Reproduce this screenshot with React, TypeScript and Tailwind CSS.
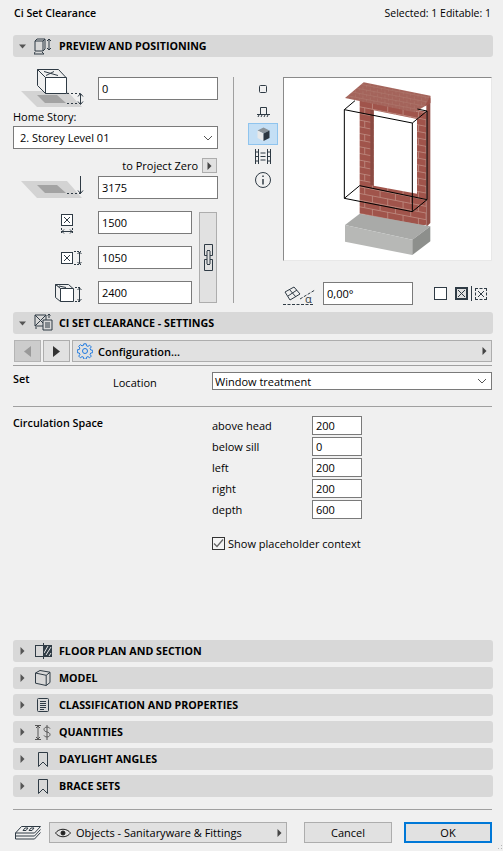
import { ReactNode } from 'react';

const ink = '#2f3b45';

// section header bar, open ones point down
const SectionBar = ({ title, open, icon }: { title: string; open?: boolean; icon: ReactNode }) => (
  <div className="flex h-[22px] items-center rounded-[3px] bg-[#d8d8d8]">
    <div className="flex w-[18px] justify-center">
      {open ? (
        <svg width="8" height="5"><path d="M1 0.500h7L4.500 4.500z" fill="#555" /></svg>
      ) : (
        <svg width="5" height="8"><path d="M0.500 0v8L4.500 4z" fill="#555" /></svg>
      )}
    </div>
    <div className="flex w-[24px] justify-center">{icon}</div>
    <span className="ml-[4px] text-[10.7px] font-bold uppercase leading-none text-black">{title}</span>
  </div>
);

const Field = ({ value, className }: { value: string; className: string }) => (
  <div className={`flex items-center border border-[#7a7a7a] bg-white pl-[3px] text-[11px] leading-none text-black ${className}`}>
    {value}
  </div>
);

const Chevron = () => (
  <svg width="10" height="6" fill="none" stroke="#555"><path d="M1 1l4 4 4-4" /></svg>
);

const SmallArrow = () => (
  <svg width="5" height="8"><path d="M0.500 0v8L4.500 4z" fill="#444" /></svg>
);

const SlabIcon = () => (
  <svg width="64" height="39" viewBox="0 0 64 39" fill="none" stroke={ink}>
    <path d="M0 22h46l15 16H16z" fill="#d3d3d3" stroke="none" />
    <path d="M16 26h20l9 8H24z" fill="#a3a3a3" stroke="none" />
    <path d="M16.500 0.500h21l7.500 8H24.500z" fill="#f0f0f0" />
    <path d="M16.500 0.500l8 8v16l-8-8z" fill="#f0f0f0" />
    <path d="M24.500 8.500H45.500V24.500H24.500z" fill="#fff" />
    <path d="M23 2.500l14 4M33 2.500L25 6.500" />
    <path d="M46 24.500h13M46 34.500h13" strokeDasharray="2 2" />
    <path d="M59.500 25v10M57 27.500l2.500-3 2.500 3M57 32.500l2.500 3 2.500-3" />
  </svg>
);

const PlaneIcon = () => (
  <svg width="64" height="23" viewBox="0 0 64 23" fill="none" stroke={ink}>
    <path d="M0 5h46l15 17H16z" fill="#d3d3d3" stroke="none" />
    <path d="M16 9h20l9 8H24z" fill="#a3a3a3" stroke="none" />
    <path d="M46 17.500h14" strokeDasharray="2 2" />
    <path d="M59.500 0v17M57 14.500l2.500 3 2.500-3" />
  </svg>
);

const WidthIcon = () => (
  <svg width="13" height="21" fill="none" stroke={ink} className="mt-[3px]">
    <rect x="0.500" y="0.500" width="11" height="11" fill="#fff" />
    <path d="M3 3l6 6M9 3L3 9" />
    <path d="M0.500 14v6M11.500 14v6" strokeDasharray="2 1" />
    <path d="M1 17.500h10M3 15.500l-2 2 2 2M9 15.500l2 2-2 2" />
  </svg>
);

const HeightIcon = () => (
  <svg width="22" height="14" fill="none" stroke={ink}>
    <rect x="0.500" y="1.500" width="11" height="11" fill="#fff" />
    <path d="M3 4l6 6M9 4L3 10" />
    <path d="M13 0.500h7M13 13.500h7" strokeDasharray="2 1" />
    <path d="M18.500 1v12M16.500 3l2-2 2 2M16.500 11l2 2 2-2" />
  </svg>
);

const DepthIcon = () => (
  <svg width="28" height="19" fill="none" stroke={ink}>
    <path d="M0.500 1.500h13l4.500 4H5.500z" fill="#f0f0f0" />
    <path d="M0.500 1.500l5 4v13l-5-4z" fill="#f0f0f0" />
    <path d="M5.500 5.500h13v13h-13z" fill="#fff" />
    <path d="M4 3l7 1.500" />
    <path d="M20 4.500h6M20 18.500h6" strokeDasharray="2 1" />
    <path d="M24.500 5v13M22.500 7l2-2 2 2M22.500 16l2 2 2-2" />
  </svg>
);

const BrickPreview = () => (
  <svg width="207" height="182" viewBox="133 25 621 546">
    <defs>
      <pattern id="brick" width="46" height="40" patternUnits="userSpaceOnUse" patternTransform="skewY(11)">
        <rect width="46" height="40" fill="#a0544b" />
        <rect width="46" height="2.500" fill="#bd8a80" />
        <rect y="20" width="46" height="2.500" fill="#bd8a80" />
        <rect x="6" y="0" width="2.500" height="20" fill="#bd8a80" />
        <rect x="29" y="20" width="2.500" height="20" fill="#bd8a80" />
      </pattern>
      <pattern id="roof" width="22" height="14" patternUnits="userSpaceOnUse" patternTransform="skewY(11)">
        <rect width="22" height="14" fill="#a4645b" />
        <rect width="22" height="1.500" fill="#b07a70" />
        <rect x="6" width="1.500" height="7" fill="#b07a70" />
        <rect x="17" y="7" width="1.500" height="7" fill="#b07a70" />
      </pattern>
    </defs>
    <path d="M360 90L532 125V470L360 432z" fill="url(#brick)" />
    <path d="M402 122L532 148V372L402 348z" fill="#fff" />
    <path d="M392 120L402 122V348L392 346z" fill="#8a4a42" />
    <path d="M532 120L560 126V465L532 470z" fill="url(#brick)" />
    <path d="M560 100L572 85V460L560 472z" fill="#8f4d45" />
    <path d="M372 38L572 78V100L525 128L316 85z" fill="url(#roof)" />
    <path d="M572 78V100L556 110z" fill="#9c5249" />
    <path d="M360 432L572 470L518 510L316 466z" fill="#a9aaa8" />
    <path d="M316 466L518 510V556L316 516z" fill="#b7b8b6" />
    <path d="M518 510L572 470V515L518 556z" fill="#8d8f8c" />
    <g fill="none" stroke="#000" strokeWidth="3">
      <path d="M314 120L518 160V426L314 386zM314 120L346 93M518 160L562 124V390L518 426M314 386L360 348L562 390M533 118L562 124" />
    </g>
  </svg>
);

const ViewIcons = () => (
  <div className="flex w-[30px] flex-col items-center">
    <div className="flex h-[23px] items-center">
      <svg width="8" height="8" fill="none" stroke={ink}><rect x="0.500" y="0.500" width="7" height="7" rx="1" /></svg>
    </div>
    <div className="flex h-[23px] items-center">
      <svg width="13" height="12" fill="none" stroke={ink}>
        <path d="M3.500 8V1.500h6V8M0 8.500h13" />
        <path d="M1 11l1-2M4 11l1-2M7 11l1-2M10 11l1-2" />
      </svg>
    </div>
    <div className="flex h-[22px] w-[30px] items-center justify-center border border-[#8fc4ee] bg-[#c4dff5]">
      <svg width="13" height="14" viewBox="0 0 13 14">
        <path d="M6.500 0.500l6 3L6.500 6.500l-6-3z" fill="#8a9298" />
        <path d="M0.500 3.500l6 3V14l-6-3z" fill="#e8e8e8" />
        <path d="M6.500 6.500l6-3V11l-6 3z" fill="#2c363f" />
      </svg>
    </div>
    <div className="flex h-[23px] items-center">
      <svg width="16" height="15" fill="none" stroke={ink}>
        <path d="M0.500 0v15M3.500 0v15M12.500 0v15M15.500 0v15M5.500 4h5M5.500 7.500h5M5.500 11h5M0 3h3.500M0 7.500h3.500M0 12h3.500M12.500 3H16M12.500 7.500H16M12.500 12H16" />
      </svg>
    </div>
    <div className="flex h-[23px] items-center">
      <svg width="16" height="16" fill="none" stroke={ink}>
        <circle cx="8" cy="8" r="7.500" />
        <path d="M8 7v5.500" strokeWidth="1.500" />
        <path d="M8 3.500v1.500" strokeWidth="1.500" />
      </svg>
    </div>
  </div>
);

const sections: { title: string; icon: ReactNode }[] = [
  {
    title: 'Floor Plan and Section',
    icon: (
      <svg width="17" height="16" fill="none" stroke={ink}>
        <rect x="0.500" y="2.500" width="16" height="11" />
        <rect x="8" y="2" width="9" height="12" fill={ink} stroke="none" />
        <path d="M9 10l4-7M11 12l5-8M14 13l2-3" stroke="#e8e8e8" />
        <path d="M8.500 0v16" />
      </svg>
    ),
  },
  {
    title: 'Model',
    icon: (
      <svg width="16" height="16" fill="none" stroke={ink}>
        <path d="M0.500 3l4.500-2.500 10 1.700v10.300l-3.800 3-10.700-2.300z" />
        <path d="M0.500 3l10.700 2.300 3.800-3M11.200 5.300v10.200" />
      </svg>
    ),
  },
  {
    title: 'Classification and Properties',
    icon: (
      <svg width="12" height="14" fill="none" stroke={ink}>
        <rect x="0.500" y="0.500" width="11" height="13" rx="1" />
        <path d="M3 3.500h6M3 5.500h6M3 7.500h6M3 9.500h6M3 11.500h4" />
      </svg>
    ),
  },
  {
    title: 'Quantities',
    icon: (
      <svg width="18" height="15" fill="none" stroke="#555">
        <path d="M1 0.500h6M1 14.500h6M4 1v13M2 3l2-2 2 2M2 12l2 2 2-2" />
        <path d="M16 3.500c-1-2-6-2-6 1 0 3 6 2 6 5 0 3-5 3-6 1M13 0v15" />
      </svg>
    ),
  },
  {
    title: 'Daylight Angles',
    icon: (
      <svg width="10" height="15" fill="none" stroke={ink}>
        <path d="M0.500 0.500h9v14L5 10 0.500 14.500z" />
      </svg>
    ),
  },
  {
    title: 'Brace Sets',
    icon: (
      <svg width="10" height="15" fill="none" stroke={ink}>
        <path d="M0.500 0.500h9v14L5 10 0.500 14.500z" />
      </svg>
    ),
  },
];

const clearance = [
  ['above head', '200'],
  ['below sill', '0'],
  ['left', '200'],
  ['right', '200'],
  ['depth', '600'],
];

export default function App() {
  return (
    <div className="relative h-[851px] w-[503px] overflow-hidden bg-[#f0f0f0] pl-[13px] pr-[10px] text-[11px] leading-none text-black [font-family:'Open_Sans',sans-serif]">
      {/* Title row */}
      <div className="flex h-[35px] items-center justify-between pb-[9px] pr-[2px]">
        <span className="pl-[1px] text-[10.6px] font-semibold">Ci Set Clearance</span>
        <span className="text-[10.5px]">Selected: 1 Editable: 1</span>
      </div>

      <SectionBar
        title="Preview and Positioning"
        open
        icon={
          <svg width="18" height="17" fill="none" stroke={ink}>
            <path d="M1 3l2-2h8v10l-2 2H1zM1 3h8v10M9 3l2-2M1 14l-1 2h10l-2-2" />
            <path d="M15 1v11M13 3l2-2 2 2M13 10l2 2 2-2" />
          </svg>
        }
      />

      {/* Preview and positioning */}
      <div className="flex h-[255px] pt-[20px]">
        <div className="w-[205px]">
          <div className="flex h-[35px] items-start">
            <div className="mt-[-8px] w-[85px] pl-[8px]"><SlabIcon /></div>
            <Field value="0" className="h-[23px] w-[120px]" />
          </div>
          <div className="mt-[-1px]">Home Story:</div>
          <div className="mt-[4px] flex h-[23px] items-center justify-between border border-[#7a7a7a] bg-white pl-[6px] pr-[4px]">
            <span>2. Storey Level 01</span>
            <Chevron />
          </div>
          <div className="mt-[9px] flex h-[15px] items-center justify-end">
            <span>to Project Zero</span>
            <div className="ml-[4px] mr-[1px] flex h-[15px] w-[15px] items-center justify-center border border-[#adadad] bg-[#e1e1e1]">
              <SmallArrow />
            </div>
          </div>
          <div className="mt-[3px] flex items-center">
            <div className="w-[85px] pl-[8px]"><PlaneIcon /></div>
            <Field value="3175" className="h-[23px] w-[120px]" />
          </div>
          <div className="mt-[12px] flex">
            <div className="w-[186px]">
              <div className="flex h-[23px] items-center">
                <div className="flex w-[85px] justify-start pl-[48px]"><WidthIcon /></div>
                <Field value="1500" className="h-[23px] w-[94px]" />
              </div>
              <div className="mt-[12px] flex h-[23px] items-center">
                <div className="flex w-[85px] justify-start pl-[48px]"><HeightIcon /></div>
                <Field value="1050" className="h-[23px] w-[94px]" />
              </div>
              <div className="mt-[12px] flex h-[23px] items-center">
                <div className="flex w-[85px] justify-start pl-[42px]"><DepthIcon /></div>
                <Field value="2400" className="h-[23px] w-[94px]" />
              </div>
            </div>
            <div className="mt-[1px] flex h-[91px] w-[18px] items-center justify-center border border-[#adadad] bg-[#e1e1e1]">
              <svg width="9" height="27" fill="none" stroke={ink}>
                <path d="M3 11.500H0.500V0.500h8v11H6M3 15.500H0.500v11h8v-11H6M3 7v13M6 7v13M3 6.500h3M3 20.500h3" />
              </svg>
            </div>
          </div>
        </div>

        <div className="ml-[15px] h-[226px] w-px bg-[#a0a0a0]" />

        <div className="ml-[14px] flex-1">
          <div className="flex">
            <ViewIcons />
            <div className="ml-[5px] h-[184px] w-[209px] border border-b-[#e8e8e8] border-l-[#8a8a8a] border-r-[#e8e8e8] border-t-[#8a8a8a] bg-white">
              <BrickPreview />
            </div>
          </div>
          <div className="mt-[21px] flex h-[23px] items-center">
            <svg width="33" height="23" className="ml-[35px]" fill="none" stroke={ink}>
              <path d="M11 5l6 7-10 6-5-8z" />
              <path d="M6 7l7 8M14 8l-9 6" />
              <path d="M0 22.500h31M17 17L32 8" strokeDasharray="3 1.500" />
              <text x="22" y="21" fontSize="11" fill={ink} stroke="none" fontFamily="Open Sans">α</text>
            </svg>
            <Field value="0,00°" className="ml-[7px] h-[23px] w-[90px]" />
            <div className="ml-[21px] h-[13px] w-[13px] border border-[#2f3b45] bg-white" />
            <div className="ml-[8px] flex h-[13px] w-[13px] items-center justify-center border-2 border-[#2f3b45] bg-[#e1e1e1]">
              <svg width="7" height="7" fill="none" stroke={ink}><path d="M0 0l7 7M7 0L0 7" /></svg>
            </div>
            <div className="ml-[3px] h-[15px] w-px bg-[#2f3b45]" />
            <div className="ml-[3px] flex h-[12px] w-[12px] items-center justify-center border border-dashed border-[#2f3b45]">
              <svg width="6" height="6" fill="none" stroke={ink}><path d="M0 0l6 6M6 0L0 6" /></svg>
            </div>
          </div>
        </div>
      </div>

      <SectionBar
        title="Ci Set Clearance - Settings"
        open
        icon={
          <svg width="19" height="18" fill="none" stroke={ink}>
            <path d="M1 1h11v11H1zM1 1l11 11M12 1L1 12" />
            <path d="M15 0v4M13.500 1.500L15 0l1.500 1.500M1 14h2M9 6h9v10H9zM11 9h5M11 11h5M11 13h5" fill="#d8d8d8" />
          </svg>
        }
      />

      {/* Configuration toolbar */}
      <div className="mr-px mt-[6px] flex h-[22px] gap-[2px] pl-px">
        <div className="flex w-[27px] items-center justify-center border border-[#b4b4b4] bg-[#cccccc]">
          <svg width="7" height="11"><path d="M7 0v11L0 5.500z" fill="#999" /></svg>
        </div>
        <div className="flex w-[27px] items-center justify-center border border-[#adadad] bg-[#e1e1e1]">
          <svg width="7" height="11"><path d="M0 0v11l7-5.500z" fill="#333" /></svg>
        </div>
        <div className="flex flex-1 items-center border border-[#adadad] bg-[#e1e1e1] pl-[4px] pr-[4px]">
          <svg width="16" height="16" viewBox="0 0 16 16" fill="none" stroke="#1f7ae0">
            <circle cx="8" cy="8" r="2.500" />
            <path d="M6.800 0.800h2.400l.3 2 1.500.6 1.600-1.200 1.700 1.700-1.200 1.600.6 1.500 2 .3v2.400l-2 .3-.6 1.500 1.200 1.600-1.700 1.700-1.600-1.200-1.500.6-.3 2H6.800l-.3-2-1.500-.6-1.600 1.200-1.700-1.700 1.200-1.600-.6-1.500-2-.3V6.800l2-.3.6-1.500-1.200-1.600 1.700-1.700 1.600 1.200 1.500-.6z" />
          </svg>
          <span className="ml-[5px] flex-1 font-semibold">Configuration...</span>
          <SmallArrow />
        </div>
      </div>
      <div className="mr-px mt-[3px] h-px bg-[#a0a0a0]" />

      {/* Set row */}
      <div className="mr-px mt-[6px] flex h-[18px] items-start">
        <span className="mt-[2px] w-[100px] text-[10.8px] font-semibold">Set</span>
        <span className="mt-[5px] w-[99px]">Location</span>
        <div className="flex h-[18px] flex-1 items-center justify-between border border-[#7a7a7a] bg-white pl-[2px] pr-[4px]">
          <span>Window treatment</span>
          <Chevron />
        </div>
      </div>
      <div className="mr-px mt-[16px] h-px bg-[#a0a0a0]" />

      {/* Circulation space */}
      <div className="mt-[9px] flex h-[224px] items-start">
        <span className="mt-[2px] w-[199px] text-[10.8px] font-semibold">Circulation Space</span>
        <div className="flex flex-col">
          {clearance.map(([label, value]) => (
            <div key={label} className="mb-[2px] flex h-[19px] items-center">
              <span className="w-[100px]">{label}</span>
              <Field value={value} className="h-[19px] w-[50px]" />
            </div>
          ))}
          <div className="mt-[16px] flex items-center">
            <div className="flex h-[13px] w-[13px] items-center justify-center border border-[#333] bg-[#f4f4f4]">
              <svg width="11" height="9" fill="none" stroke="#666" strokeWidth="1.300"><path d="M1 4.500l3 3 6-7" /></svg>
            </div>
            <span className="ml-[3px]">Show placeholder context</span>
          </div>
        </div>
      </div>

      {/* Collapsed sections */}
      <div className="flex flex-col gap-[5px]">
        {sections.map((s) => (
          <SectionBar key={s.title} title={s.title} icon={s.icon} />
        ))}
      </div>
      <div className="mr-px mt-[12px] h-px bg-[#a0a0a0]" />

      {/* Footer */}
      <div className="mt-[12px] flex h-[21px] items-center">
        <svg width="26" height="14" className="ml-[2px]" fill="none" stroke={ink}>
          <path d="M6.500 0.500h19l-6 6.500H0.500z" />
          <path d="M8 4.500l2-2.500h3l-2 2.500zM14 4.500l2-2.500h3l-2 2.500z" />
          <path d="M0.500 7v3h19l6-6.500M0.500 10v3h19l6-6.500" />
        </svg>
        <div className="ml-[8px] flex h-[21px] w-[238px] items-center border border-[#adadad] bg-[#e1e1e1] pl-[5px] pr-[4px]">
          <svg width="16" height="10" fill="none" stroke="#222">
            <path d="M0.500 5C4 0 12 0 15.500 5 12 10 4 10 0.500 5z" />
            <circle cx="8" cy="5" r="2" fill="#222" />
          </svg>
          <span className="ml-[5px] flex-1">Objects - Sanitaryware &amp; Fittings</span>
          <SmallArrow />
        </div>
        <div className="ml-[17px] flex h-[21px] w-[88px] items-center justify-center border border-[#adadad] bg-[#e1e1e1]">
          Cancel
        </div>
        <div className="ml-[12px] flex h-[21px] w-[88px] items-center justify-center border-2 border-[#0078d7] bg-[#e1e1e1]">
          OK
        </div>
      </div>

      {/* Resize grip */}
      <svg width="6" height="6" className="absolute bottom-0 right-0" fill="#b5b5b5">
        <rect x="4" y="0" width="1" height="1" />
        <rect x="1" y="3" width="1" height="1" />
        <rect x="4" y="3" width="1" height="1" />
      </svg>
    </div>
  );
}
